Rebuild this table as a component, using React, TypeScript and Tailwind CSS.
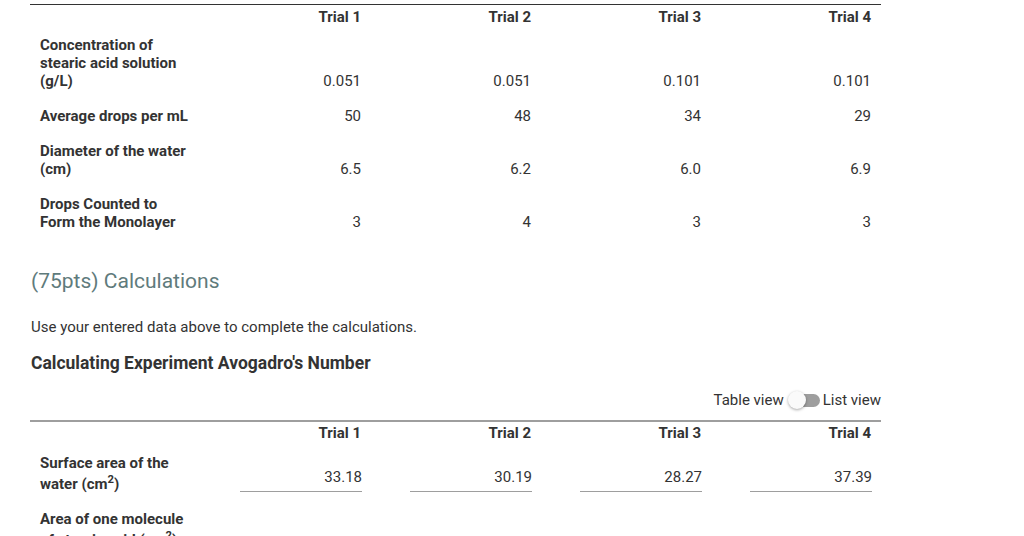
import React from "react";

const rows1: { label: React.ReactNode; values: string[] }[] = [
  {
    label: (
      <>
        Concentration of
        <br />
        stearic acid solution
        <br />
        (g/L)
      </>
    ),
    values: ["0.051", "0.051", "0.101", "0.101"],
  },
  { label: <>Average drops per mL</>, values: ["50", "48", "34", "29"] },
  {
    label: (
      <>
        Diameter of the water
        <br />
        (cm)
      </>
    ),
    values: ["6.5", "6.2", "6.0", "6.9"],
  },
  {
    label: (
      <>
        Drops Counted to
        <br />
        Form the Monolayer
      </>
    ),
    values: ["3", "4", "3", "3"],
  },
];

const trials = ["Trial 1", "Trial 2", "Trial 3", "Trial 4"];

function Header() {
  return (
    <div className="flex font-bold text-[15px] leading-[18px] text-[#333333]">
      <div className="w-[171px] shrink-0" />
      {trials.map((t) => (
        <div key={t} className="w-[170px] shrink-0 pr-[10px] text-right">
          {t}
        </div>
      ))}
    </div>
  );
}

export default function App() {
  return (
    <div className="min-h-[536px] bg-white font-['Roboto','Liberation_Sans',sans-serif] text-[#333333] overflow-hidden">
      <div className="pl-[30px] pt-[4px]">
        {/* Table 1 */}
        <div className="w-[851px] border-t border-[#333333]">
          <div className="pt-[3px] pb-[1px]">
            <Header />
          </div>
          {rows1.map((r, i) => (
            <div key={i} className="flex items-end pt-[9px] pb-[8px] text-[15px] leading-[18px]">
              <div className="w-[171px] shrink-0 pl-[10px] font-bold">{r.label}</div>
              {r.values.map((v, j) => (
                <div key={j} className="w-[170px] shrink-0 pr-[10px] text-right">
                  {v}
                </div>
              ))}
            </div>
          ))}
        </div>

        <h2 className="mt-[28px] ml-[1px] text-[21px] leading-[28px] text-[#5f7b7c]">
          (75pts) Calculations
        </h2>
        <p className="mt-[22px] ml-[1px] text-[15px] leading-[20px]">
          Use your entered data above to complete the calculations.
        </p>
        <h3 className="mt-[14px] ml-[1px] text-[17.5px] leading-[24px] font-bold">
          Calculating Experiment Avogadro's Number
        </h3>

        {/* Toggle */}
        <div className="mt-[15px] w-[851px] flex justify-end items-center h-[20px] text-[15px] leading-[20px]">
          <span>Table view</span>
          <div className="relative ml-[4px] w-[32px] h-[20px]">
            <div className="absolute left-[8px] top-[4px] w-[24px] h-[13px] rounded-full bg-[#9e9e9e]" />
            <div className="absolute left-0 top-[1px] w-[18px] h-[18px] rounded-full bg-[#fafafa] shadow-[0_1px_3px_rgba(0,0,0,0.35)]" />
          </div>
          <span className="ml-[3px]">List view</span>
        </div>

        {/* Table 2 */}
        <div className="mt-[10px] w-[851px] border-t-2 border-[#9e9e9e]">
          <div className="pt-[2px]">
            <Header />
          </div>
          <div className="flex items-end pt-[11px] text-[15px] leading-[21px]">
            <div className="w-[171px] shrink-0 pl-[10px] font-bold">
              Surface area of the
              <br />
              water (cm<sup>2</sup>)
            </div>
            {["33.18", "30.19", "28.27", "37.39"].map((v, j) => (
              <div key={j} className="w-[170px] shrink-0 pr-[9px] flex justify-end">
                <div className="w-[122px] mb-[3px] pt-[7px] pb-[4px] leading-[20px] text-right border-b border-[#9e9e9e]">
                  {v}
                </div>
              </div>
            ))}
          </div>
          <div className="flex items-end pt-[14px] text-[15px] leading-[21px]">
            <div className="w-[171px] shrink-0 pl-[10px] font-bold">
              Area of one molecule
              <br />
              of stearic acid (cm<sup>2</sup>)
            </div>
          </div>
        </div>
      </div>
    </div>
  );
}
